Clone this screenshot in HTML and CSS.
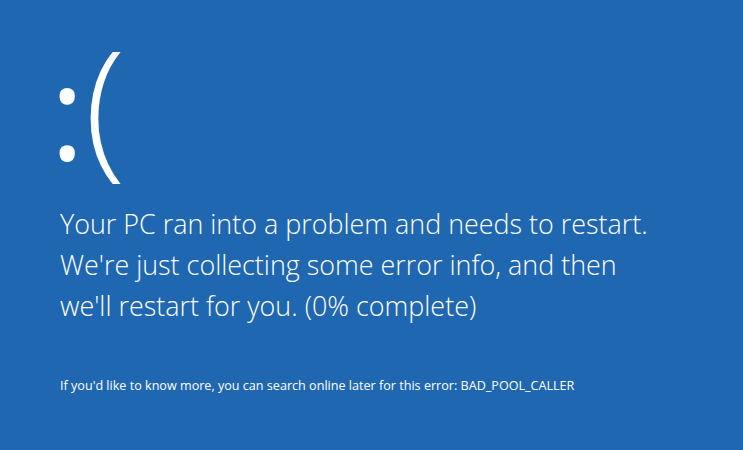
FILE: index.html
```html
<!DOCTYPE html>
<html lang="en">
<head>
    <meta charset="UTF-8">
    <meta name="viewport" content="width=device-width, initial-scale=1.0">
    <title>Restart</title>
    <link rel="stylesheet" href="styles.css">
</head>
<body>
    <div class="screen">
        <div class="face"><span class="eyes">:</span><span class="mouth">(</span></div>
        <p class="message">Your PC ran into a problem and needs to restart.<br>We're just collecting some error info, and then<br>we'll restart for you. (0% complete)</p>
        <p class="details">If you'd like to know more, you can search online later for this error: BAD_POOL_CALLER</p>
    </div>
</body>
</html>
```

FILE: styles.css
```css
html, body {
    margin: 0;
    height: 100%;
}
body {
    background: #2067b2;
    color: #fff;
    font-family: "Open Sans", "Noto Sans", sans-serif;
    font-weight: 300;
    overflow: hidden;
}
.screen {
    padding: 26px 0 0 60px;
}
.face {
    display: flex;
    align-items: baseline;
    margin-left: -10px;
}
.eyes {
    font-size: 131px;
    font-weight: 400;
    line-height: 1;
}
.mouth {
    font-size: 151px;
    line-height: 1;
}
.message {
    margin: 0;
    margin-top: 26px;
    font-size: 26.9px;
    line-height: 41px;
}
.details {
    margin: 0;
    margin-top: 51px;
    font-size: 12.6px;
    font-weight: 400;
}
```
